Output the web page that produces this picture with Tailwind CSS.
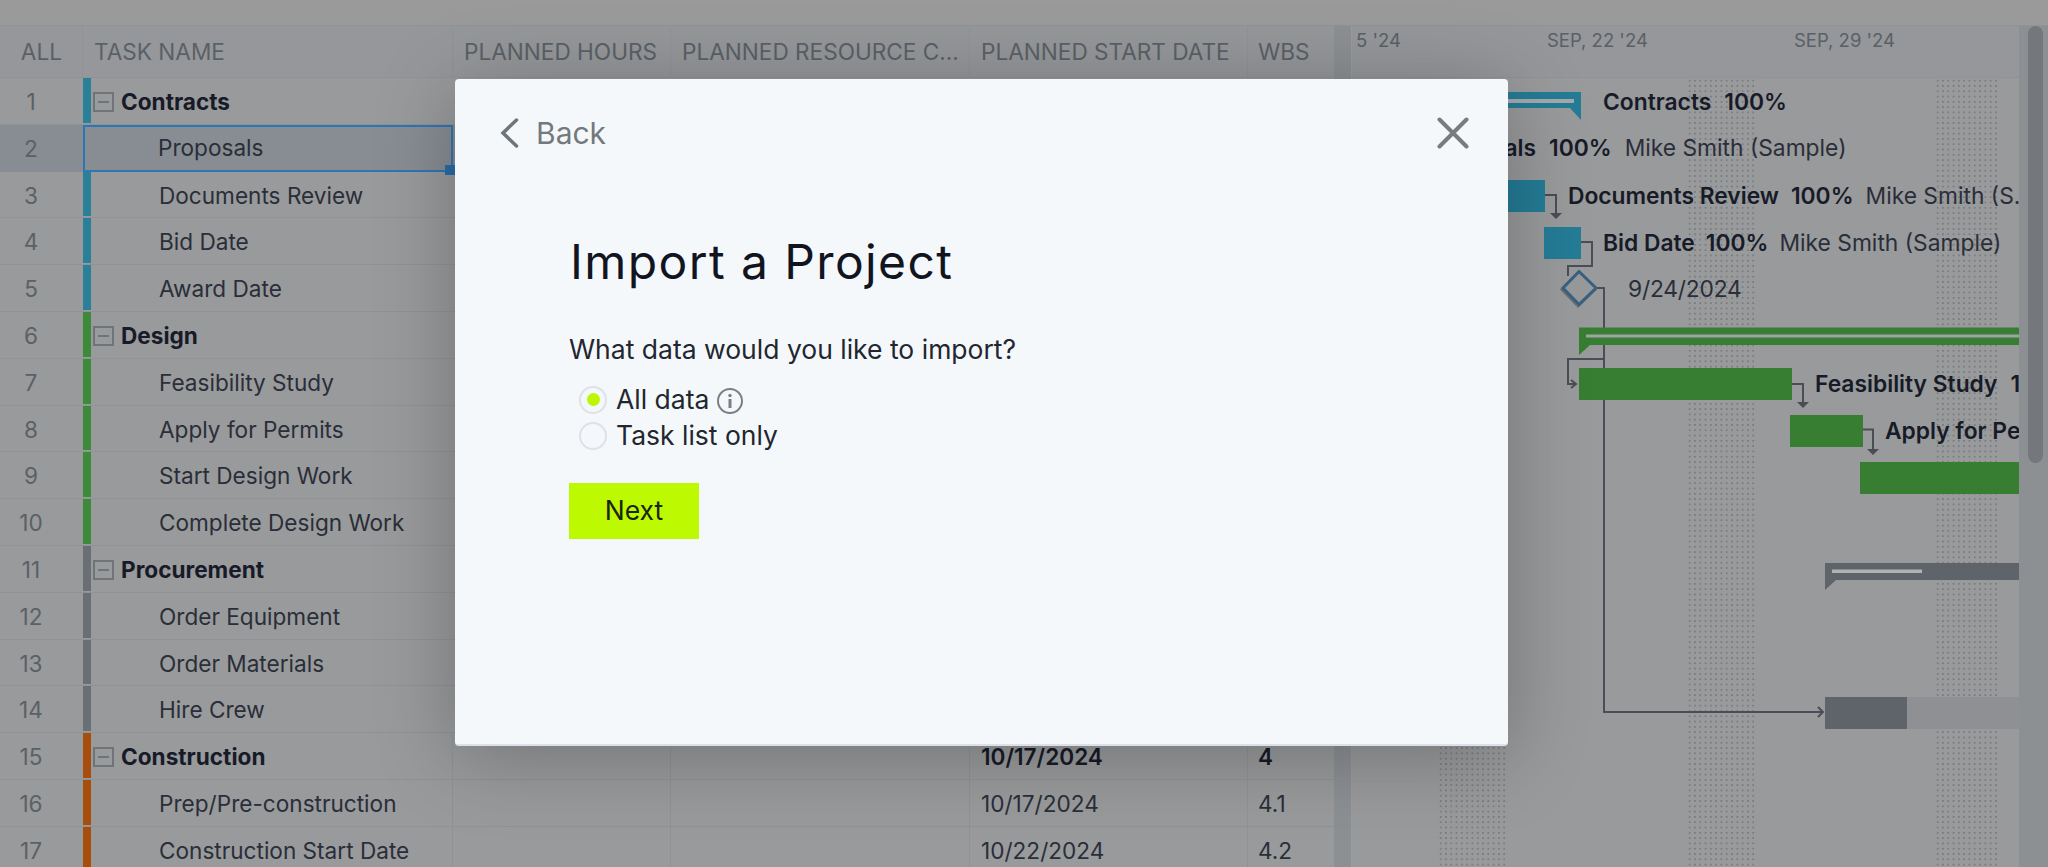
<!DOCTYPE html>
<html lang="en">
  <head>
    <meta charset="UTF-8" />
    <script src="https://cdn.jsdelivr.net/npm/@tailwindcss/browser@4"></script>
    <title>Import a Project</title>
  </head>
  <body class="relative h-[867px] w-[2048px] overflow-hidden bg-[#999a9b] font-[Inter,sans-serif] text-[22.8px] text-[#2a2e39]">
    <!-- top bar -->
    <div class="h-[26px] border-b border-[#909395] bg-[#9a9a9a]"></div>

    <div class="flex h-[841px]">
      <!-- task table -->
      <div class="w-[1334px] shrink-0 text-[22.6px]">
        <div class="flex h-[52px] items-center border-b border-[#8f9395] bg-[#95979a] pt-[1px] text-[#5a6166]">
          <div class="flex h-full w-[83px] items-center justify-end border-r border-[#8f9395] pr-[20px]">ALL</div>
          <div class="flex h-full w-[370px] items-center border-r border-[#8f9395] pl-[11px]">TASK NAME</div>
          <div class="flex h-full w-[218px] items-center border-r border-[#8f9395] pl-[11px]">PLANNED HOURS</div>
          <div class="flex h-full w-[299px] items-center border-r border-[#8f9395] pl-[11px]">PLANNED RESOURCE C...</div>
          <div class="flex h-full w-[278px] items-center border-r border-[#8f9395] pl-[11px]">PLANNED START DATE</div>
          <div class="flex h-full flex-1 items-center pl-[10px]">WBS</div>
        </div>

        <div class="flex h-[46.8px] border-b border-[#8f9395]"><div class="flex w-[62px] items-center justify-center pt-[2px] text-[#5a6166]">1</div><div class="w-[21px]"></div><div class="mb-[1px] w-[8px] bg-[#2a8099]"></div><div class="flex items-center pl-[2px] pt-[2px] font-bold text-[#171b28]"><span class="mr-[7px] flex h-[20px] w-[21px] items-center justify-center border-2 border-[#6e7478]"><span class="h-[2px] w-[11px] bg-[#6e7478]"></span></span>Contracts</div></div>
        <div class="relative flex h-[46.8px] bg-[#878d92]"><div class="flex w-[62px] items-center justify-center pt-[2px] text-[#5a6166]">2</div><div class="w-[21px]"></div><div class="flex w-[370px] items-center border-2 border-[#2f76b5] pl-[73px]">Proposals</div><div class="absolute left-[445px] top-[40px] h-[10px] w-[10px] bg-[#2b6ca8]"></div></div>
        <div class="flex h-[46.8px] border-b border-[#8f9395]"><div class="flex w-[62px] items-center justify-center pt-[2px] text-[#5a6166]">3</div><div class="w-[21px]"></div><div class="mb-[1px] w-[8px] bg-[#2a8099]"></div><div class="flex items-center pl-[68px] pt-[2px]">Documents Review</div></div>
        <div class="flex h-[46.8px] border-b border-[#8f9395]"><div class="flex w-[62px] items-center justify-center pt-[2px] text-[#5a6166]">4</div><div class="w-[21px]"></div><div class="mb-[1px] w-[8px] bg-[#2a8099]"></div><div class="flex items-center pl-[68px] pt-[2px]">Bid Date</div></div>
        <div class="flex h-[46.8px] border-b border-[#8f9395]"><div class="flex w-[62px] items-center justify-center pt-[2px] text-[#5a6166]">5</div><div class="w-[21px]"></div><div class="mb-[1px] w-[8px] bg-[#2a8099]"></div><div class="flex items-center pl-[68px] pt-[2px]">Award Date</div></div>
        <div class="flex h-[46.8px] border-b border-[#8f9395]"><div class="flex w-[62px] items-center justify-center pt-[2px] text-[#5a6166]">6</div><div class="w-[21px]"></div><div class="mb-[1px] w-[8px] bg-[#3c8a3a]"></div><div class="flex items-center pl-[2px] pt-[2px] font-bold text-[#171b28]"><span class="mr-[7px] flex h-[20px] w-[21px] items-center justify-center border-2 border-[#6e7478]"><span class="h-[2px] w-[11px] bg-[#6e7478]"></span></span>Design</div></div>
        <div class="flex h-[46.8px] border-b border-[#8f9395]"><div class="flex w-[62px] items-center justify-center pt-[2px] text-[#5a6166]">7</div><div class="w-[21px]"></div><div class="mb-[1px] w-[8px] bg-[#3c8a3a]"></div><div class="flex items-center pl-[68px] pt-[2px]">Feasibility Study</div></div>
        <div class="flex h-[46.8px] border-b border-[#8f9395]"><div class="flex w-[62px] items-center justify-center pt-[2px] text-[#5a6166]">8</div><div class="w-[21px]"></div><div class="mb-[1px] w-[8px] bg-[#3c8a3a]"></div><div class="flex items-center pl-[68px] pt-[2px]">Apply for Permits</div></div>
        <div class="flex h-[46.8px] border-b border-[#8f9395]"><div class="flex w-[62px] items-center justify-center pt-[2px] text-[#5a6166]">9</div><div class="w-[21px]"></div><div class="mb-[1px] w-[8px] bg-[#3c8a3a]"></div><div class="flex items-center pl-[68px] pt-[2px]">Start Design Work</div></div>
        <div class="flex h-[46.8px] border-b border-[#8f9395]"><div class="flex w-[62px] items-center justify-center pt-[2px] text-[#5a6166]">10</div><div class="w-[21px]"></div><div class="mb-[1px] w-[8px] bg-[#3c8a3a]"></div><div class="flex items-center pl-[68px] pt-[2px]">Complete Design Work</div></div>
        <div class="flex h-[46.8px] border-b border-[#8f9395]"><div class="flex w-[62px] items-center justify-center pt-[2px] text-[#5a6166]">11</div><div class="w-[21px]"></div><div class="mb-[1px] w-[8px] bg-[#6a6e75]"></div><div class="flex items-center pl-[2px] pt-[2px] font-bold text-[#171b28]"><span class="mr-[7px] flex h-[20px] w-[21px] items-center justify-center border-2 border-[#6e7478]"><span class="h-[2px] w-[11px] bg-[#6e7478]"></span></span>Procurement</div></div>
        <div class="flex h-[46.8px] border-b border-[#8f9395]"><div class="flex w-[62px] items-center justify-center pt-[2px] text-[#5a6166]">12</div><div class="w-[21px]"></div><div class="mb-[1px] w-[8px] bg-[#6a6e75]"></div><div class="flex items-center pl-[68px] pt-[2px]">Order Equipment</div></div>
        <div class="flex h-[46.8px] border-b border-[#8f9395]"><div class="flex w-[62px] items-center justify-center pt-[2px] text-[#5a6166]">13</div><div class="w-[21px]"></div><div class="mb-[1px] w-[8px] bg-[#6a6e75]"></div><div class="flex items-center pl-[68px] pt-[2px]">Order Materials</div></div>
        <div class="flex h-[46.8px] border-b border-[#8f9395]"><div class="flex w-[62px] items-center justify-center pt-[2px] text-[#5a6166]">14</div><div class="w-[21px]"></div><div class="mb-[1px] w-[8px] bg-[#6a6e75]"></div><div class="flex items-center pl-[68px] pt-[2px]">Hire Crew</div></div>
        <div class="flex h-[46.8px] border-b border-[#8f9395]"><div class="flex w-[62px] items-center justify-center pt-[2px] text-[#5a6166]">15</div><div class="w-[21px]"></div><div class="mb-[1px] w-[8px] bg-[#a84e0c]"></div><div class="flex w-[362px] items-center border-r border-[#8f9395] pl-[2px] pt-[2px] font-bold text-[#171b28]"><span class="mr-[7px] flex h-[20px] w-[21px] items-center justify-center border-2 border-[#6e7478]"><span class="h-[2px] w-[11px] bg-[#6e7478]"></span></span>Construction</div><div class="w-[218px] border-r border-[#8f9395]"></div><div class="w-[299px] border-r border-[#8f9395]"></div><div class="flex w-[278px] items-center border-r border-[#8f9395] pl-[11px] pt-[2px] font-semibold text-[#171b28]">10/17/2024</div><div class="flex items-center pl-[10px] pt-[2px] font-semibold text-[#171b28]">4</div></div>
        <div class="flex h-[46.8px] border-b border-[#8f9395]"><div class="flex w-[62px] items-center justify-center pt-[2px] text-[#5a6166]">16</div><div class="w-[21px]"></div><div class="mb-[1px] w-[8px] bg-[#a84e0c]"></div><div class="flex w-[362px] items-center border-r border-[#8f9395] pl-[68px] pt-[2px]">Prep/Pre-construction</div><div class="w-[218px] border-r border-[#8f9395]"></div><div class="w-[299px] border-r border-[#8f9395]"></div><div class="flex w-[278px] items-center border-r border-[#8f9395] pl-[11px] pt-[2px]">10/17/2024</div><div class="flex items-center pl-[10px] pt-[2px]">4.1</div></div>
        <div class="flex h-[46.8px] border-b border-[#8f9395]"><div class="flex w-[62px] items-center justify-center pt-[2px] text-[#5a6166]">17</div><div class="w-[21px]"></div><div class="mb-[1px] w-[8px] bg-[#a84e0c]"></div><div class="flex w-[362px] items-center border-r border-[#8f9395] pl-[68px] pt-[2px]">Construction Start Date</div><div class="w-[218px] border-r border-[#8f9395]"></div><div class="w-[299px] border-r border-[#8f9395]"></div><div class="flex w-[278px] items-center border-r border-[#8f9395] pl-[11px] pt-[2px]">10/22/2024</div><div class="flex items-center pl-[10px] pt-[2px]">4.2</div></div>
      </div>

      <!-- splitter -->
      <div class="w-[18px] shrink-0 border-r border-[#9a9c9d] bg-[#8d9093]"></div>

      <!-- gantt canvas, offsets are relative to x=1352 y=26 -->
      <div class="relative w-[667px] shrink-0 overflow-hidden">
        <div class="absolute left-0 right-0 top-0 h-[52px] border-b border-[#8f9395] bg-[#95979a]"></div>
        <span class="absolute left-[4px] top-[1px] text-[18.5px] text-[#5a6166]">5 '24</span>
        <span class="absolute left-[195px] top-[1px] text-[18.5px] text-[#5a6166]">SEP, 22 '24</span>
        <span class="absolute left-[442px] top-[1px] text-[18.5px] text-[#5a6166]">SEP, 29 '24</span>

        <div class="absolute bottom-0 left-[86px] top-[52px] w-[70px] bg-[radial-gradient(#7a7d80_0.8px,transparent_1px)] bg-[length:5.3px_5.3px]"></div>
        <div class="absolute bottom-0 left-[335px] top-[52px] w-[69px] bg-[radial-gradient(#7a7d80_0.8px,transparent_1px)] bg-[length:5.3px_5.3px]"></div>
        <div class="absolute bottom-0 left-[583px] top-[52px] w-[65px] bg-[radial-gradient(#7a7d80_0.8px,transparent_1px)] bg-[length:5.3px_5.3px]"></div>

        <svg class="absolute left-0 top-0" width="667" height="841" viewBox="1352 26 667 841" fill="none">
          <g stroke="#4a4d55" stroke-width="2">
            <path d="M1545 195H1556V214" />
            <path d="M1581 242H1592V266H1568V276" />
            <path d="M1597 288H1604V712H1822" />
            <path d="M1604 359H1568V384H1575" />
            <path d="M1792 384H1803V403" />
            <path d="M1863 429.500H1873V450" />
            <path d="M1571 380L1576 384L1571 388" />
            <path d="M1818 707L1823 712L1818 717" />
          </g>
          <path d="M1550 213H1562L1556 219Z M1797 402H1809L1803 408Z M1867 449H1879L1873 455Z" fill="#4a4d55" />

          <path d="M1400 92H1581V120L1570 108H1400Z" fill="#247c96" />
          <rect x="1400" y="99" width="174" height="4" fill="#a5a9ab" />
          <rect x="1400" y="180" width="145" height="32" fill="#247c96" />
          <rect x="1544" y="227" width="37" height="32" fill="#247c96" />
          <path d="M1578 273L1595 289.500L1578 306L1562 289.500Z" stroke="#6b6f72" stroke-width="3" />
          <path d="M1579 271.500L1596 288L1579 304.500L1563 288Z" fill="#98999a" stroke="#39617f" stroke-width="3" />

          <path d="M1579 327.500H2019V345H1590L1579 355Z" fill="#377e33" />
          <rect x="1586" y="334.500" width="433" height="3" fill="#a0a2a3" />
          <rect x="1579" y="368" width="213" height="32" fill="#377e33" />
          <rect x="1790" y="415" width="73" height="32" fill="#377e33" />
          <rect x="1860" y="462" width="159" height="32" fill="#377e33" />

          <path d="M1825 563H2019V580H1836L1825 590Z" fill="#5f636a" />
          <rect x="1832" y="569.500" width="90" height="3.500" fill="#b0b2b3" />
          <rect x="1825" y="697" width="82" height="32" fill="#5f636a" />
          <rect x="1907" y="697" width="112" height="32" fill="#8e9093" />
        </svg>

        <div class="absolute left-[251px] top-[62px] flex h-[28px] items-center gap-[13px] whitespace-nowrap font-semibold text-[#171b28]"><span>Contracts</span><span>100%</span></div>
        <div class="absolute right-[483px] top-[108px] flex h-[28px] items-center whitespace-nowrap font-semibold text-[#171b28]">Proposals</div>
        <div class="absolute left-[197px] top-[108px] flex h-[28px] items-center gap-[13px] whitespace-nowrap"><span class="font-semibold text-[#171b28]">100%</span><span>Mike Smith (Sample)</span></div>
        <div class="absolute left-[216px] top-[156px] flex h-[28px] items-center gap-[12px] whitespace-nowrap"><span class="font-semibold text-[#171b28]">Documents Review</span><span class="font-semibold text-[#171b28]">100%</span><span>Mike Smith (S.</span></div>
        <div class="absolute left-[251px] top-[203px] flex h-[28px] items-center gap-[11px] whitespace-nowrap"><span class="font-semibold text-[#171b28]">Bid Date</span><span class="font-semibold text-[#171b28]">100%</span><span>Mike Smith (Sample)</span></div>
        <div class="absolute left-[276px] top-[249px] h-[28px] leading-[28px] tracking-[-0.2px]">9/24/2024</div>
        <div class="absolute left-[463px] top-[344px] flex h-[28px] items-center gap-[13px] whitespace-nowrap font-semibold text-[#171b28]"><span>Feasibility Study</span><span>100%</span></div>
        <div class="absolute left-[533px] top-[391px] h-[28px] whitespace-nowrap font-semibold leading-[28px] text-[#171b28]">Apply for Permits</div>
      </div>

      <!-- scrollbar -->
      <div class="relative flex-1 bg-[#8d9093]">
        <div class="absolute left-[9px] top-0 h-[437px] w-[15px] rounded-full bg-[#74787c]"></div>
      </div>
    </div>

    <!-- modal -->
    <div class="absolute left-[455px] top-[79px] h-[667px] w-[1053px] rounded-[4px] border-b-2 border-[#dde0e8] bg-[#f4f8fb] shadow-[0_10px_80px_rgba(0,0,0,0.26)]">
      <div class="flex items-center justify-between pl-[45px] pr-[39px] pt-[38px]">
        <div class="flex items-center gap-[17px] text-[30px] leading-[30px] text-[#73797d]">
          <svg width="19" height="30" viewBox="0 0 19 30" fill="none"><path d="M16.500 2L3 15L16.500 28" stroke="#6f7579" stroke-width="3.500" stroke-linecap="round" /></svg>
          <span>Back</span>
        </div>
        <svg width="32" height="32" viewBox="0 0 32 32" fill="none"><path d="M2.500 2.500L29.500 29.500M29.500 2.500L2.500 29.500" stroke="#797c7f" stroke-width="4" stroke-linecap="round" /></svg>
      </div>

      <div class="pl-[114px] pt-[85px]">
        <h1 class="pl-[1px] text-[48px] font-normal leading-[56px] tracking-[1.4px] text-[#12151f]">Import a Project</h1>
        <p class="mt-[44px] text-[26.500px] leading-[30px] text-[#22262f]">What data would you like to import?</p>
        <div class="mt-[17px] flex h-[37px] items-center pl-[10px] text-[26.500px] text-[#22262f]">
          <span class="mr-[9px] flex h-[28px] w-[28px] items-center justify-center rounded-full border-2 border-[#dfe1ea]"><span class="h-[13px] w-[13px] rounded-full bg-[#bdf600]"></span></span>
          <span>All data</span>
          <svg class="ml-[7px] mt-[2px]" width="28" height="28" viewBox="0 0 28 28" fill="none"><circle cx="14" cy="14" r="12" stroke="#7b7f83" stroke-width="2" /><circle cx="14" cy="8.500" r="1.700" fill="#7b7f83" /><rect x="12.500" y="12" width="3" height="9" fill="#7b7f83" /></svg>
        </div>
        <div class="flex h-[36px] items-center pl-[10px] text-[26.500px] text-[#22262f]">
          <span class="mr-[9px] h-[28px] w-[28px] rounded-full border-2 border-[#dfe1ea]"></span>
          <span>Task list only</span>
        </div>
        <button class="mt-[29px] h-[56px] w-[130px] bg-[#bdf900] text-[26.500px] text-[#1b2412]">Next</button>
      </div>
    </div>
  </body>
</html>
